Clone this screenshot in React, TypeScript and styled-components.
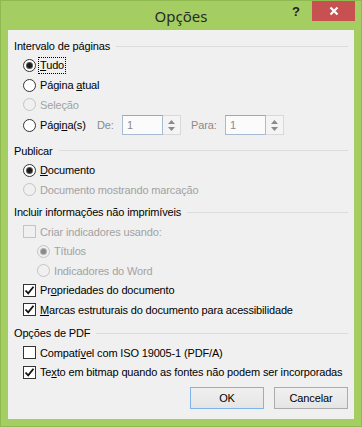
import React from 'react';
import styled, { createGlobalStyle, css } from 'styled-components';

const GlobalStyle = createGlobalStyle`
  html, body {
    margin: 0;
    padding: 0;
    background: #a4cd62;
  }
`;

const Window = styled.div`
  width: 362px;
  height: 427px;
  box-sizing: border-box;
  background: #a4cd62;
  border: 1px solid #8fb951;
  display: flex;
  flex-direction: column;
  font-family: 'Liberation Sans', Arial, sans-serif;
  font-size: 11px;
  letter-spacing: -0.15px;
  color: #000;
`;

const TitleBar = styled.div`
  height: 29px;
  display: flex;
  align-items: flex-start;
`;

const TitleSide = styled.div`
  width: 76px;
  flex: none;
`;

const Title = styled.div`
  flex: 1;
  text-align: center;
  font-family: 'Noto Sans', sans-serif;
  font-size: 15px;
  letter-spacing: 0;
  line-height: 30px;
  color: #2a2a2a;
`;

const HelpButton = styled.div`
  width: 22px;
  text-align: center;
  font-weight: 700;
  font-size: 13px;
  line-height: 22px;
  color: #222;
  margin-right: 5px;
`;

const CloseButton = styled.div`
  width: 43px;
  height: 20px;
  background: #c75050;
  display: flex;
  align-items: center;
  justify-content: center;
  margin-right: 6px;
`;

const Client = styled.div`
  flex: 1;
  margin: 0 7px 7px 7px;
  background: #f0f0f0;
  padding: 6px 6px 0 6px;
  display: flex;
  flex-direction: column;
`;

const Group = styled.section<{ gap?: number }>`
  display: flex;
  flex-direction: column;
  margin-top: ${p => p.gap ?? 0}px;
`;

const GroupTitle = styled.div`
  height: 20px;
  display: flex;
  align-items: center;
  gap: 6px;
  &::after {
    content: '';
    flex: 1;
    height: 1px;
    background: #dcdcdc;
  }
`;

const Option = styled.div<{ indent?: number; width?: number }>`
  height: 19.5px;
  display: flex;
  align-items: center;
  gap: 4px;
  padding-left: ${p => p.indent ?? 9}px;
  ${p => p.width && css`width: ${p.width}px; flex: none;`}
`;

const RadioMark = styled.span<{ checked?: boolean; disabled?: boolean }>`
  width: 13px;
  height: 13px;
  box-sizing: border-box;
  border-radius: 50%;
  border: 1px solid ${p => (p.disabled ? '#c4c4c4' : '#333')};
  background: ${p => (p.disabled ? '#f0f0f0' : '#fff')};
  display: flex;
  align-items: center;
  justify-content: center;
  flex: none;
  &::after {
    content: '';
    display: ${p => (p.checked ? 'block' : 'none')};
    width: 5px;
    height: 5px;
    border-radius: 50%;
    background: ${p => (p.disabled ? '#8a8a8a' : '#1a1a1a')};
    box-shadow: 0 0 0 1px ${p => (p.disabled ? '#b0b0b0' : '#555')};
  }
`;

const CheckMark = styled.span<{ disabled?: boolean }>`
  width: 13px;
  height: 13px;
  box-sizing: border-box;
  border: 1px solid ${p => (p.disabled ? '#c4c4c4' : '#333')};
  background: ${p => (p.disabled ? '#f0f0f0' : '#fff')};
  display: flex;
  align-items: center;
  justify-content: center;
  flex: none;
`;

const OptionText = styled.span<{ disabled?: boolean; focused?: boolean }>`
  color: ${p => (p.disabled ? '#a2a2a2' : '#000')};
  white-space: nowrap;
  ${p =>
    p.focused &&
    css`
      outline: 1px dotted #000;
      padding: 0 1px;
      margin-left: -1px;
      line-height: 15px;
    `}
`;

const Key = styled.span`
  text-decoration: underline;
`;

const SpinRow = styled.div`
  height: 21px;
  display: flex;
  align-items: center;
`;

const SpinLabel = styled.span<{ width: number }>`
  width: ${p => p.width}px;
  flex: none;
  color: #8a8a8a;
`;

const SpinBox = styled.div`
  width: 59px;
  height: 20px;
  box-sizing: border-box;
  display: flex;
  border: 1px solid #d9d9d9;
  background: #f4f4f4;
  flex: none;
`;

const SpinInput = styled.div`
  flex: 1;
  margin: -1px 0 -1px -1px;
  border: 1px solid #a9bad3;
  border-top-color: #93a9ca;
  background: #fbfbfb;
  color: #8a8a8a;
  padding-left: 4px;
  line-height: 18px;
`;

const SpinArrows = styled.div`
  width: 17px;
  display: flex;
  flex-direction: column;
  align-items: center;
  justify-content: center;
  gap: 3px;
`;

const Spacer = styled.div<{ width: number }>`
  width: ${p => p.width}px;
  flex: none;
`;

const ButtonRow = styled.div`
  display: flex;
  justify-content: flex-end;
  gap: 10px;
  margin-top: 5px;
`;

const DialogButton = styled.button<{ primary?: boolean }>`
  width: 74px;
  height: 22px;
  box-sizing: border-box;
  font: inherit;
  letter-spacing: inherit;
  color: #000;
  border: 1px solid ${p => (p.primary ? '#7eb4ea' : '#acacac')};
  background: linear-gradient(#f0f0f0, #e5e5e5);
  padding: 0;
`;

const Check = () => (
  <svg width="11" height="11" viewBox="0 0 11 11">
    <path d="M1.5 5.5 L4.2 8.3 L9.5 1.8" fill="none" stroke="#111" strokeWidth="1.8" />
  </svg>
);

const Arrow = ({ up }: { up?: boolean }) => (
  <svg width="7" height="4" viewBox="0 0 7 4">
    <path d={up ? 'M0 4 L3.5 0 L7 4 Z' : 'M0 0 L3.5 4 L7 0 Z'} fill="#8a8a8a" />
  </svg>
);

const Spin = ({ value }: { value: string }) => (
  <SpinBox>
    <SpinInput>{value}</SpinInput>
    <SpinArrows>
      <Arrow up />
      <Arrow />
    </SpinArrows>
  </SpinBox>
);

const App: React.FC = () => {
  return (
    <>
      <GlobalStyle />
      <Window>
        <TitleBar>
          <TitleSide />
          <Title>Opções</Title>
          <HelpButton>?</HelpButton>
          <CloseButton>
            <svg width="10" height="10" viewBox="0 0 10 10">
              <path d="M1.5 1.5 L8.5 8.5 M8.5 1.5 L1.5 8.5" stroke="#fff" strokeWidth="2.2" />
            </svg>
          </CloseButton>
        </TitleBar>
        <Client>
          <Group>
            <GroupTitle>Intervalo de páginas</GroupTitle>
            <Option>
              <RadioMark checked />
              <OptionText focused><Key>T</Key>udo</OptionText>
            </Option>
            <Option>
              <RadioMark />
              <OptionText>Página <Key>a</Key>tual</OptionText>
            </Option>
            <Option>
              <RadioMark disabled />
              <OptionText disabled>Seleção</OptionText>
            </Option>
            <SpinRow>
              <Option width={74}>
                <RadioMark />
                <OptionText>Pági<Key>n</Key>a(s)</OptionText>
              </Option>
              <SpinLabel width={25}>De:</SpinLabel>
              <Spin value="1" />
              <Spacer width={10} />
              <SpinLabel width={34}>Para:</SpinLabel>
              <Spin value="1" />
            </SpinRow>
          </Group>

          <Group gap={5}>
            <GroupTitle>Publicar</GroupTitle>
            <Option>
              <RadioMark checked />
              <OptionText><Key>D</Key>ocumento</OptionText>
            </Option>
            <Option>
              <RadioMark disabled />
              <OptionText disabled>Documento mostrando marcação</OptionText>
            </Option>
          </Group>

          <Group gap={2.5}>
            <GroupTitle>Incluir informações não imprimíveis</GroupTitle>
            <Option>
              <CheckMark disabled />
              <OptionText disabled>Criar indicadores usando:</OptionText>
            </Option>
            <Option indent={23}>
              <RadioMark checked disabled />
              <OptionText disabled>Títulos</OptionText>
            </Option>
            <Option indent={23}>
              <RadioMark disabled />
              <OptionText disabled>Indicadores do Word</OptionText>
            </Option>
            <Option>
              <CheckMark><Check /></CheckMark>
              <OptionText>Pr<Key>o</Key>priedades do documento</OptionText>
            </Option>
            <Option>
              <CheckMark><Check /></CheckMark>
              <OptionText><Key>M</Key>arcas estruturais do documento para acessibilidade</OptionText>
            </Option>
          </Group>

          <Group gap={3.5}>
            <GroupTitle>Opções de PDF</GroupTitle>
            <Option>
              <CheckMark />
              <OptionText>Compatí<Key>v</Key>el com ISO 19005-1 (PDF/A)</OptionText>
            </Option>
            <Option>
              <CheckMark><Check /></CheckMark>
              <OptionText>Te<Key>x</Key>to em bitmap quando as fontes não podem ser incorporadas</OptionText>
            </Option>
          </Group>

          <ButtonRow>
            <DialogButton primary>OK</DialogButton>
            <DialogButton>Cancelar</DialogButton>
          </ButtonRow>
        </Client>
      </Window>
    </>
  );
};

export default App;
